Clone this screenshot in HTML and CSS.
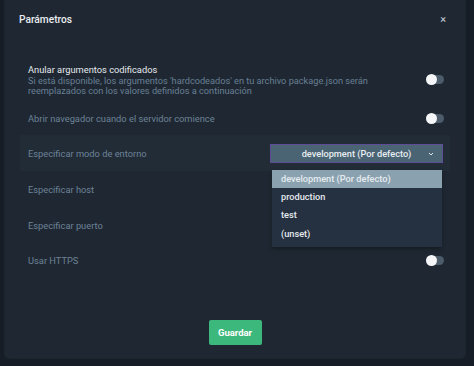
FILE: index.html
```html
<!DOCTYPE html>
<html lang="es">
<head>
<meta charset="utf-8">
<title>Parámetros</title>
<link rel="stylesheet" href="styles.css">
</head>
<body>
<div class="modal">
  <div class="header">
    <div class="title">Parámetros</div>
    <div class="close">&#215;</div>
  </div>
  <div class="body">
    <div class="row row-tall">
      <div class="text">
        <div class="name">Anular argumentos codificados</div>
        <div class="desc">Si está disponible, los argumentos 'hardcodeados' en tu archivo package.json serán<br>reemplazados con los valores definidos a continuación</div>
      </div>
      <div class="toggle"><span class="knob"></span></div>
    </div>
    <div class="row row-short">
      <div class="label">Abrir navegador cuando el servidor comience</div>
      <div class="toggle"><span class="knob"></span></div>
    </div>
    <div class="row active">
      <div class="label">Especificar modo de entorno</div>
      <div class="select-wrap">
        <div class="select">
          <span class="select-value">development (Por defecto)</span>
          <svg class="chev" width="6" height="4" viewBox="0 0 6 4"><path d="M1 1 L3 3 L5 1" fill="none" stroke="#dfe6ea" stroke-width="1"/></svg>
        </div>
        <ul class="options">
          <li class="opt selected">development (Por defecto)</li>
          <li class="opt">production</li>
          <li class="opt">test</li>
          <li class="opt">(unset)</li>
        </ul>
      </div>
    </div>
    <div class="row">
      <div class="label">Especificar host</div>
    </div>
    <div class="row">
      <div class="label">Especificar puerto</div>
    </div>
    <div class="row row-short">
      <div class="label">Usar HTTPS</div>
      <div class="toggle"><span class="knob"></span></div>
    </div>
  </div>
  <div class="footer">
    <button class="save">Guardar</button>
  </div>
</div>
</body>
</html>
```

FILE: styles.css
```css
html, body {
  margin: 0;
  padding: 0;
}
body {
  background: #161d26;
  font-family: Roboto, "Liberation Sans", sans-serif;
  width: 474px;
  height: 366px;
  overflow: hidden;
}
.modal {
  margin-left: 5px;
  width: 460px;
  height: 358px;
  background: #1f2832;
  border-radius: 0 0 4px 4px;
  box-shadow: 0 0 0 1px #1c242e;
  display: flex;
  flex-direction: column;
}
.header {
  height: 38px;
  display: flex;
  align-items: center;
  justify-content: space-between;
  padding: 0 19px 0 14px;
}
.title {
  color: #e9edf0;
  font-size: 10.2px;
  font-weight: 500;
}
.close {
  color: #c9d1d8;
  font-size: 11px;
  line-height: 1;
}
.body {
  padding: 20px 15px 0 15px;
  display: flex;
  flex-direction: column;
}
.row {
  height: 36px;
  display: flex;
  align-items: center;
  justify-content: space-between;
  padding: 0 7px 0 8px;
}
.row-tall {
  height: 43px;
}
.row-short {
  height: 34px;
}
.row.active {
  background: #222c37;
}
.name {
  color: #e6eaee;
  font-size: 9.3px;
  line-height: 12px;
}
.desc {
  color: #687f94;
  font-size: 9.2px;
  line-height: 10px;
}
.label {
  color: #6d8297;
  font-size: 9.3px;
}
.toggle {
  position: relative;
  width: 15px;
  height: 9px;
  border-radius: 5px;
  background: #4c5c6a;
  margin-right: -1px;
}
.knob {
  position: absolute;
  left: -3px;
  top: -1px;
  width: 11px;
  height: 11px;
  border-radius: 50%;
  background: #f4f6f8;
}
.select-wrap {
  position: relative;
}
.select {
  width: 171px;
  height: 17px;
  border: 1px solid #5f4c97;
  background: #4b6474;
  display: flex;
  align-items: center;
  justify-content: center;
  position: relative;
}
.select-value {
  color: #e8eef2;
  font-size: 9.2px;
  font-weight: 500;
}
.chev {
  position: absolute;
  right: 8px;
  top: 7px;
}
.options {
  position: absolute;
  list-style: none;
  margin: 0;
  padding: 0 0 4px 0;
  left: 2px;
  top: 26px;
  width: 170px;
  background: #253140;
  box-shadow: 0 2px 4px rgba(0,0,0,0.35);
  z-index: 2;
}
.opt {
  height: 18.5px;
  line-height: 18.5px;
  padding-left: 9px;
  color: #e6ebef;
  font-size: 9.2px;
  font-weight: 500;
}
.opt.selected {
  background: #8aa2b0;
  height: 18px;
  line-height: 18px;
}
.footer {
  flex: 1;
  display: flex;
  justify-content: center;
  align-items: flex-end;
  padding-bottom: 13px;
}
.save {
  width: 53px;
  height: 25px;
  border: none;
  border-radius: 2px;
  background: #3cb87c;
  color: #ffffff;
  font-family: Roboto, "Liberation Sans", sans-serif;
  font-size: 9.5px;
  font-weight: 700;
  padding: 0;
}
```
